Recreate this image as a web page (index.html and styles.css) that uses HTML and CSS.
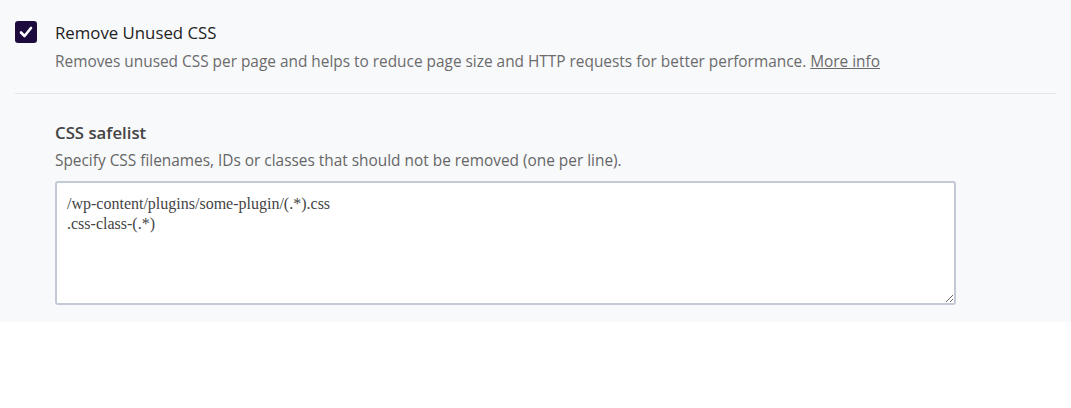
FILE: index.html
```html
<!DOCTYPE html>
<html>
<head>
<meta charset="utf-8">
<link rel="stylesheet" href="styles.css">
</head>
<body>
<div class="panel">
  <div class="option">
    <label class="check">
      <span class="box"><svg viewBox="0 0 22 22" width="22" height="22"><path d="M6 11.5 L9.5 15 L16 7" fill="none" stroke="#fff" stroke-width="2.6" stroke-linecap="round" stroke-linejoin="round"/></svg></span>
    </label>
    <div class="option-body">
      <div class="option-title">Remove Unused CSS</div>
      <div class="option-desc">Removes unused CSS per page and helps to reduce page size and HTTP requests for better performance. <a href="#" class="more">More info</a></div>
    </div>
  </div>
  <div class="sub">
    <div class="sub-title">CSS safelist</div>
    <div class="sub-desc">Specify CSS filenames, IDs or classes that should not be removed (one per line).</div>
    <textarea class="safelist">/wp-content/plugins/some-plugin/(.*).css
.css-class-(.*)</textarea>
  </div>
</div>
</body>
</html>
```
FILE: styles.css
```css
html, body {
  margin: 0;
  padding: 0;
  background: #fff;
}
body {
  font-family: "Open Sans", "Noto Sans", sans-serif;
}
.panel {
  background: #f8f9fb;
  padding: 0 15px 16px 15px;
  height: 322px;
  box-sizing: border-box;
}
.option {
  display: flex;
  gap: 18px;
  padding-top: 21px;
  padding-bottom: 20px;
  border-bottom: 1px solid #e3e5e9;
}
.box {
  display: block;
  width: 22px;
  height: 22px;
  border-radius: 3px;
  background: #1e0b3d;
}
.box svg { display: block; }
.option-title {
  font-size: 16.8px;
  line-height: 23px;
  color: #222;
}
.option-desc {
  margin-top: 7px;
  font-size: 15.4px;
  line-height: 22px;
  color: #6b6b6b;
}
.more {
  color: #6b6b6b;
  text-decoration: underline;
}
.sub {
  padding-left: 40px;
  padding-right: 100px;
  padding-top: 27px;
}
.sub-title {
  font-size: 16.8px;
  font-weight: 600;
  line-height: 23px;
  color: #444;
}
.sub-desc {
  margin-top: 6px;
  font-size: 15.4px;
  line-height: 22px;
  color: #666;
}
.safelist {
  display: block;
  margin-top: 9px;
  width: 901px;
  height: 124px;
  box-sizing: border-box;
  border: 2px solid #c3cad6;
  border-radius: 3px;
  background: #fff;
  padding: 11px 10px;
  font-family: "Liberation Serif", serif;
  font-size: 16px;
  line-height: 20px;
  color: #444;
}
```
